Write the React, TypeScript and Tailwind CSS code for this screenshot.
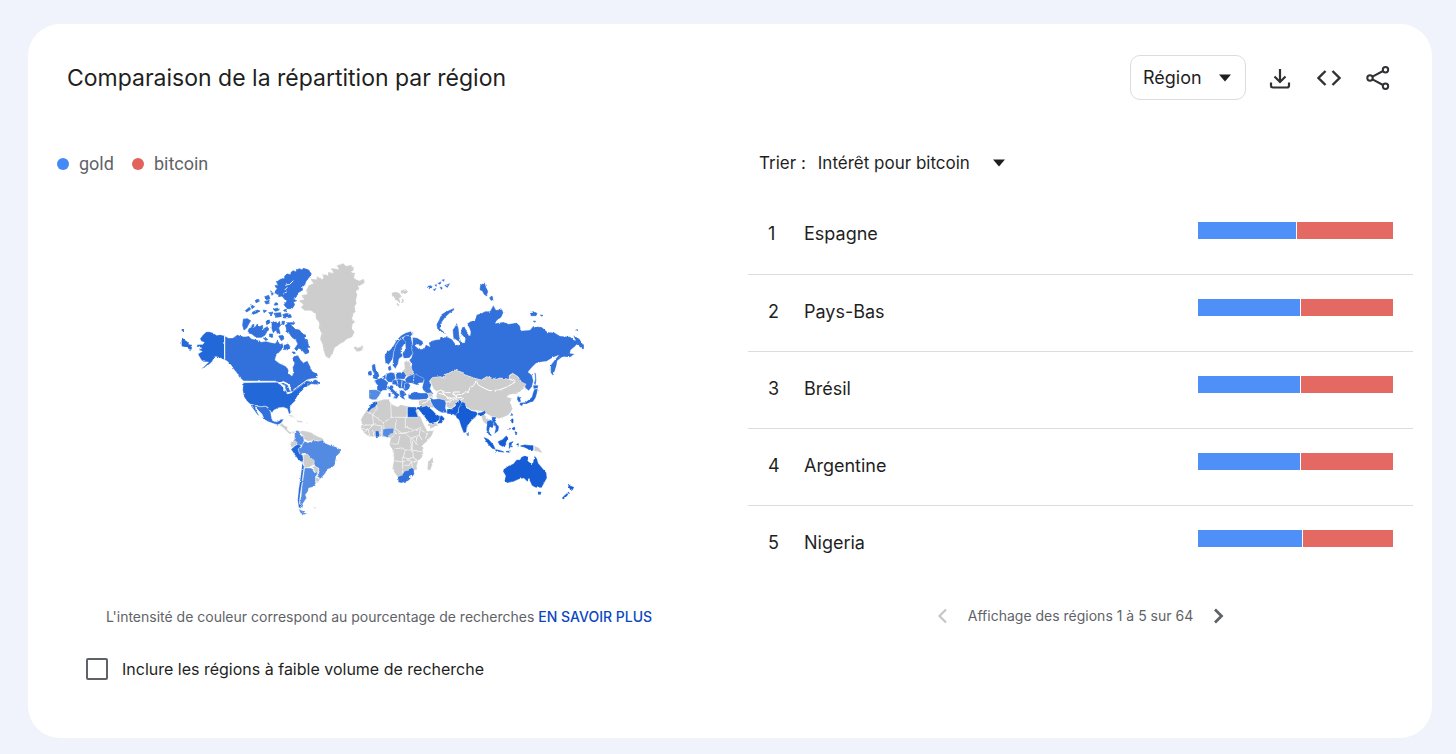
import { useState } from 'react';

const regions = [
  { rank: 1, name: 'Espagne', gold: 50.5 },
  { rank: 2, name: 'Pays-Bas', gold: 52.5 },
  { rank: 3, name: 'Brésil', gold: 52.5 },
  { rank: 4, name: 'Argentine', gold: 52.5 },
  { rank: 5, name: 'Nigeria', gold: 53.5 },
];

const legend = [
  { label: 'gold', dot: 'bg-[#448af6]' },
  { label: 'bitcoin', dot: 'bg-[#e2635c]' },
];

// bold shapes are small islands, outlined in their own colour so they stay visible
type Shape = { d: string; fill: string; bold?: boolean };

const GREY = '#cdcdcd';
const LIGHT = '#538ae2';
const MID = '#3071db';
const STRONG = '#2468d8';
const DARK = '#125cd4';

const americas: Shape[] = [
  // Alaska and the tip of Chukotka
  { fill: STRONG, d: 'M164 257L150 254L140 256L128 248L118 245L108 246L98 256L90 266L94 274L103 277L99 283L82 284L80 290L96 294L86 300L97 304L84 312L88 320L94 330L100 335L116 336L108 344L93 358L104 352L118 343L126 335L131 326L134 320L141 320L152 324L164 329Z' },
  { fill: STRONG, d: 'M36 264L46 272L54 278L56 284L66 286L62 290L68 296L60 298L50 292L46 290L36 288ZM36 238L41 240L40 243L36 242Z', bold: true },
  // Canada
  { fill: MID, d: 'M164 258L176 264L188 264L202 254L212 258L224 260L236 258L244 266L262 270L274 276L288 274L304 278L316 280L322 270L330 282L338 280L340 294L332 302L318 318L315 330L328 340L346 348L354 356L358 372L366 378L370 370L368 352L374 340L366 328L372 318L384 316L392 330L400 338L412 332L420 348L426 362L440 374L442 384L424 386L410 390L424 396L436 388L448 396L440 404L424 402L408 412L390 414L374 424L352 428L340 404L322 395L222 394L208 382L200 368L190 356L184 346L172 334L164 329Z' },
  { fill: MID, bold: true, d: 'M346 226L356 220L366 228L376 238L388 240L398 252L408 256L402 264L412 272L414 282L420 292L412 292L416 308L406 312L396 300L386 294L380 302L374 296L384 282L378 270L366 262L358 250L348 246L350 236Z' },
  { fill: MID, bold: true, d: 'M424 72L416 60L400 55L396 60L388 56L380 60L378 66L370 62L364 66L362 74L352 72L344 78L344 86L334 86L320 96L324 104L314 108L322 116L312 128L326 132L326 140L336 138L346 150L352 152L342 164L352 176L366 176L374 164L370 156L380 152L368 148L378 142L384 128L398 120L396 112L404 104L408 94L414 86Z' },
  { fill: MID, bold: true, d: 'M220 208L232 206L242 212L236 222L230 234L222 240L218 226ZM236 238L250 222L254 234L262 222L268 230L278 226L278 236L290 246L284 256L274 262L258 262L246 252L234 248Z' },
  { fill: MID, bold: true, d: 'M284 140L296 136L300 146L290 150ZM302 122L310 132L306 136ZM284 154L296 152L298 160L288 162ZM256 150L266 148L268 154L258 158ZM242 164L254 170L246 176ZM226 182L238 172L242 178L230 186ZM248 186L262 180L272 184L258 190L246 194ZM280 180L290 182L282 188ZM296 188L310 186L304 196ZM312 160L320 158L324 164L314 166ZM310 178L322 174L328 180L316 184ZM312 190L332 188L334 200L318 202ZM338 194L350 190L362 194L364 202L344 204ZM340 180L350 178L346 186Z' },
  { fill: MID, bold: true, d: 'M288 214L298 210L300 218L290 224ZM306 218L316 212L322 222L328 214L332 224L326 234L330 248L322 250L318 238L310 248L306 236ZM336 214L344 214L342 224L336 222ZM282 236L292 230L296 240L288 246ZM298 252L308 252L308 262L300 262ZM280 264L292 266L288 272ZM326 258L338 256L342 266L334 272ZM342 286L354 282L360 290L352 300L342 298ZM366 306L374 306L376 310L370 312ZM352 218L374 218L372 223L354 223Z' },
  { fill: MID, bold: true, d: 'M430 368L440 370L442 377L434 379ZM442 395L450 398L446 401Z' },
  // United States
  { fill: STRONG, d: 'M220 398L322 397L332 404L344 418L352 430L366 426L384 414L398 404L410 392L416 396L412 408L404 414L398 420L388 430L380 442L376 452L366 462L360 472L362 490L357 492L352 476L340 472L326 473L312 480L306 488L302 484L294 472L286 468L272 470L256 466L240 462L230 452L222 440L218 420Z' },
  // Mexico
  { fill: MID, d: 'M240 464L256 467L272 471L286 469L294 474L302 486L304 500L308 512L318 516L328 512L332 508L341 508L336 516L330 522L322 524L308 520L292 514L282 506L276 492L268 484L262 478L256 470L258 480L268 498L262 494L252 480Z' },
  { fill: GREY, d: 'M326 524L336 520L342 526L352 530L352 540L362 546L374 544L372 550L358 552L346 540L338 532ZM352 494L366 496L378 506L366 502ZM380 510L398 514L396 518L382 516ZM408 518L414 518L412 521Z' },
];

const southAmerica: Shape[] = [
  { fill: GREY, d: 'M386 186L396 182L410 184L424 188L440 198L456 204L462 210L452 214L438 212L424 212L414 214L408 210L402 208L398 196Z' },
  { fill: LIGHT, d: 'M374 188L380 181L388 184L390 194L400 200L402 212L398 224L388 226L380 222L370 214L374 204Z' },
  { fill: GREY, d: 'M364 214L376 212L382 218L372 228L366 234L360 226Z' },
  { fill: LIGHT, d: 'M398 222L404 214L414 218L424 214L434 212L446 214L458 210L466 220L480 226L496 230L511 238L510 248L500 258L496 272L494 286L484 294L472 298L466 310L452 326L440 318L448 308L446 294L436 290L430 276L422 264L410 254L400 250L388 250L384 238L394 232Z' },
  { fill: STRONG, d: 'M362 236L368 234L374 228L384 222L394 228L384 238L388 250L398 256L400 268L397 278L384 268L374 254Z' },
  { fill: GREY, d: 'M400 254L412 252L424 264L434 276L428 286L418 292L406 294L400 280ZM426 290L436 288L446 298L446 308L436 308ZM436 322L450 326L446 336L436 334Z' },
  { fill: LIGHT, d: 'M404 294L414 294L424 294L434 308L444 310L436 320L436 334L438 346L426 352L416 354L414 364L406 374L410 384L404 392L398 402L398 414L392 414L390 398L394 374L396 350L400 322Z' },
  { fill: STRONG, d: 'M397 278L402 290L398 318L394 350L390 376L388 398L394 416L386 412L383 390L386 358L392 320Z' },
  { fill: LIGHT, d: 'M386 418L398 422L402 428L412 430L402 434L392 430ZM430 414L436 412L436 415Z' },
];

const greenland: Shape[] = [
  { fill: GREY, d: 'M478 326L466 318L460 300L458 284L450 268L454 250L446 234L448 218L438 206L436 190L422 182L404 182L392 172L400 164L386 152L402 148L394 136L412 132L408 122L416 106L430 100L420 86L440 88L440 78L456 88L460 82L456 72L474 76L474 66L490 70L484 54L506 58L500 46L520 40L528 48L544 44L552 58L544 66L556 70L552 84L568 92L580 86L586 96L576 104L566 108L568 116L558 124L562 134L558 150L560 160L554 170L558 184L552 190L546 206L556 216L548 222L546 236L554 246L546 262L530 268L522 276L510 282L496 292L488 310Z' },
  { fill: GREY, bold: true, d: 'M552 293L558 291L562 295L577 290L579 297L570 303L560 303L556 298Z' },
];

const northEurasia: Shape[] = [
  // Svalbard
  { fill: GREY, bold: true, d: 'M156 130L164 127L176 129L184 140L176 145L180 156L172 152L164 143L158 139ZM184 122L197 119L203 126L192 131L184 129ZM186 146L191 151L188 158ZM170 162L177 164L176 168Z' },
  // Arctic archipelagos
  { fill: MID, d: 'M262 108L272 106L280 112L268 118ZM280 106L291 102L290 110ZM292 100L304 94L302 106ZM304 90L314 86L312 96ZM312 106L331 100L322 114ZM298 110L311 111L304 120ZM278 118L290 115L284 124Z' },
  { fill: MID, bold: true, d: 'M422 106L433 99L437 112L443 124L440 138L432 132L428 123L420 119ZM449 143L456 138L459 149L453 151ZM571 188L580 185L591 190L588 197L573 197ZM601 195L609 196L606 199ZM580 213L587 214L584 217ZM709 239L715 240L712 242Z' },
  { fill: MID, bold: true, d: 'M293 236L291 224L299 208L305 194L317 187L330 181L341 176L341 180L328 189L315 201L307 212L301 222L299 236L314 249L306 246Z' },
  // Russia
  { fill: MID, d: 'M218 262L232 264L248 274L250 284L240 288L230 282L226 288L238 298L252 296L258 284L270 290L266 278L284 270L300 268L300 262L324 262L336 268L346 282L356 286L358 276L340 264L338 240L346 228L350 218L356 236L358 260L364 278L374 278L376 266L362 250L366 232L374 230L380 244L390 258L392 246L388 234L380 222L392 214L404 212L410 194L424 190L436 184L450 184L460 166L468 180L486 178L490 188L484 202L470 212L466 220L490 216L506 222L530 218L540 228L542 242L570 240L580 228L606 232L622 246L644 248L660 258L690 260L706 272L700 256L718 266L732 288L732 298L720 292L712 282L704 290L692 300L690 310L704 312L690 322L668 320L652 332L650 344L640 378L632 368L632 346L644 330L656 316L640 322L620 334L604 336L588 340L574 354L564 366L576 376L580 392L576 410L566 422L556 414L552 404L544 396L534 380L518 370L508 376L508 388L480 384L470 388L440 380L424 390L408 386L396 382L374 374L364 366L344 360L326 370L312 374L316 384L300 380L276 384L268 394L274 404L270 416L280 432L272 434L258 428L246 416L252 390L236 382L224 376L218 366L212 356L216 344L208 330L214 324L218 310L212 296L218 280Z' },
  { fill: MID, d: 'M584 366L588 372L589 392L586 410L583 400L585 386Z' },
  // Nordics
  { fill: MID, d: 'M196 256L212 258L217 280L214 296L219 310L208 324L191 325L187 310L197 298L196 282L186 270Z' },
  { fill: MID, d: 'M160 310L166 288L176 272L190 264L195 280L183 296L183 312L189 318L177 326L174 342L166 356L158 346Z' },
  { fill: MID, d: 'M134 318L140 306L150 300L160 288L170 270L184 256L198 248L213 244L218 256L198 257L181 266L168 284L161 306L157 328L146 344L136 340Z' },
  { fill: GREY, d: 'M192 334L208 334L212 346L216 358L222 374L204 380L192 376L186 364L194 356Z' },
  // British Isles and Denmark
  { fill: MID, bold: true, d: 'M97 346L104 343L106 356L112 364L117 378L110 385L99 384L104 372L98 360ZM85 366L93 363L95 374L87 377ZM145 352L151 348L153 359L147 361Z' },
];

const southEurasia: Shape[] = [
  { fill: MID, d: 'M140 11L152 7L163 9L167 24L158 37L144 36L137 26ZM127 20L137 13L138 27L129 27Z' },
  { fill: MID, d: 'M167 8L193 5L198 18L193 28L169 27Z' },
  { fill: MID, d: 'M102 32L118 25L126 23L137 31L145 38L139 52L141 61L128 61L122 67L111 61L111 44Z' },
  { fill: LIGHT, d: 'M87 59L108 59L123 66L117 78L108 89L96 89L87 85Z' },
  { fill: MID, d: 'M140 50L156 45L161 52L158 56L169 67L180 75L174 80L171 86L157 84L166 80L159 70L149 62ZM145 69L152 69L152 81L146 81Z' },
  { fill: MID, d: 'M158 31L176 27L190 31L204 36L211 46L207 58L196 63L188 55L178 55L170 45L156 43Z' },
  { fill: MID, d: 'M179 59L192 63L200 74L191 79L196 90L184 84L179 72Z' },
  { fill: MID, d: 'M195 28L204 19L224 11L236 17L253 26L249 38L236 39L232 46L214 39L199 39Z' },
  { fill: MID, d: 'M205 73L224 65L240 69L261 69L268 80L258 88L236 89L216 89L205 85Z' },
  // Central Asia and China
  { fill: GREY, d: 'M270 32L278 22L300 20L316 24L312 14L326 10L344 0L364 6L374 14L396 22L424 30L440 20L470 28L480 24L508 28L508 18L518 10L534 20L544 36L558 42L552 56L540 62L530 72L520 72L508 74L500 80L518 86L510 96L516 110L514 124L504 136L490 142L476 146L466 142L454 140L444 134L430 124L412 122L396 120L378 112L370 100L362 90L352 94L344 108L332 116L320 112L318 96L306 88L296 90L288 80L292 66L280 56L276 46Z' },
  { fill: GREY, d: 'M236 92L256 88L268 88L276 104L284 114L272 112L256 108L246 112L236 104ZM262 70L274 68L280 80L268 80Z' },
  { fill: MID, d: 'M268 82L280 88L296 86L314 90L318 100L316 114L322 128L306 128L294 122L282 112L274 98Z' },
  { fill: DARK, d: 'M229 111L246 111L260 107L276 119L291 135L301 138L299 149L288 157L270 161L261 150L249 134Z' },
  { fill: DARK, d: 'M298 140L304 134L314 146L305 159L292 161L298 150Z' },
  { fill: GREY, d: 'M264 162L288 158L294 166L272 176Z' },
  { fill: DARK, d: 'M321 117L334 117L345 108L351 95L363 91L367 104L357 112L355 126L347 138L336 133L321 131Z' },
  { fill: DARK, d: 'M356 115L366 95L375 99L379 111L396 121L408 123L413 132L405 143L397 149L389 159L381 169L379 187L371 189L363 169L357 149L349 143L347 134L355 126ZM412 129L424 127L437 121L437 129L428 139L416 137ZM379 190L386 189L387 197L381 197Z' },
  // South-East Asia
  { fill: GREY, d: 'M424 138L434 134L442 144L448 150L440 156L442 164L434 160L428 152Z' },
  { fill: STRONG, d: 'M441 153L454 149L463 162L457 173L449 173L447 184L456 197L448 198L439 180ZM455 141L469 141L465 154L477 170L475 183L463 192L467 174L457 156Z' },
  { fill: DARK, bold: true, d: 'M433 203L446 209L459 224L465 237L457 235L445 222ZM467 239L484 243L491 246L468 243ZM475 215L488 209L499 198L505 206L497 216L497 225L488 229L479 224ZM508 219L519 215L513 222L517 231L511 229L508 235ZM498 245L511 243L508 247ZM530 223L535 221L534 229ZM542 228L554 225L572 227L579 227L579 241L566 237L553 231Z' },
  { fill: DARK, bold: true, d: 'M515 147L519 147L519 159L515 157ZM516 176L523 171L525 178L520 179ZM525 185L531 188L528 195ZM514 131L517 132L516 137ZM507 179L511 174L508 181Z' },
  { fill: GREY, d: 'M583 227L596 233L609 249L594 245L583 243Z' },
  { fill: STRONG, d: 'M539 98L556 97L566 89L575 82L579 68L583 57L593 57L591 70L587 83L581 93L568 98L560 102L549 102L546 109L539 104ZM579 46L595 46L593 55L581 57ZM533 77L541 83L543 95L536 97L531 88Z' },
  // Oceania
  { fill: DARK, d: 'M491 298L506 287L520 281L530 269L540 269L544 261L554 257L567 261L563 272L574 281L579 278L584 257L591 266L595 280L607 294L619 308L621 324L613 338L605 353L588 353L576 347L567 328L562 335L552 325L538 327L520 335L502 339L493 332L497 318L489 304Z' },
  { fill: DARK, bold: true, d: 'M594 366L603 367L600 374ZM685 343L692 349L701 352L696 361L691 359ZM687 366L680 378L670 387L667 384L677 374Z' },
];

const africa: Shape[] = [
  { fill: GREY, d: 'M78 124L90 116L108 104L110 94L132 88L148 88L152 102L162 106L174 110L182 104L200 108L228 112L232 124L244 146L252 164L262 184L282 180L276 196L262 212L246 228L250 250L246 262L234 274L230 290L232 298L222 302L218 316L204 330L184 338L176 336L174 322L162 306L158 290L162 270L160 244L148 224L152 206L146 200L130 202L116 196L100 200L84 198L72 188L62 174L66 160L62 148Z' },
  { fill: GREY, d: 'M264 276L278 261L280 276L271 301L262 299Z' },
  { fill: STRONG, d: 'M79 125L87 114L94 99L108 94L113 101L105 111L94 117L86 125Z' },
  { fill: DARK, d: 'M201 111L227 111L231 118L227 122L235 143L201 143Z' },
  { fill: LIGHT, d: 'M129 177L146 175L163 175L159 189L150 193L144 203L129 197Z' },
  { fill: STRONG, d: 'M106 183L116 182L119 199L107 202Z' },
  { fill: MID, d: 'M174 320L186 315L194 303L206 301L214 293L221 296L223 312L213 325L204 333L184 339L175 337Z' },
];

const africaBorders =
  'M80 124L98 134L100 164L70 166M98 134L112 116L108 104M98 134L130 158L154 142L152 102M154 142L196 142L202 142V110M196 142V170L194 176M130 158L132 178M168 148L166 176M196 142H234M100 164L84 180L64 174M100 164L128 168M84 180L90 198M98 180L102 198M124 170L124 198M166 176L186 190L214 184L244 172M162 176L166 190L150 206M166 190L196 190L212 204L214 240L196 240L188 234L164 236M180 196L174 222L152 222M212 204L238 196L240 178M238 196L246 210M214 204L236 228M218 212L216 240L248 246M218 240L220 262L206 266L188 262L188 276L162 272M196 240L190 262M188 276L188 310M188 276L206 268L214 276L206 286L190 286M214 276L230 274L222 262M218 292L214 276M232 200L226 222M240 178L262 192L256 206M84 180L70 186M196 170L218 178';

const asiaBorders =
  'M410 32L400 48L390 52L386 64L366 72L346 76L330 68L316 68L302 60L290 66M410 34L414 44L430 54L450 62L476 60L498 52L520 40L528 34L508 28M296 70L312 74L328 88L344 82L352 90M304 62L318 80L334 84M346 76L350 84L366 82M318 96L334 92L344 86M362 90L372 84M378 112L396 122L412 124M268 88L256 98L246 100M344 76L340 66L360 66';

function Land({ shapes }: { shapes: Shape[] }) {
  return (
    <>
      {shapes.map((s, i) => (
        <path
          key={i}
          d={s.d}
          fill={s.fill}
          stroke={s.bold ? s.fill : '#fff'}
          strokeWidth={s.bold ? 2 : 1}
        />
      ))}
    </>
  );
}

function WorldMap() {
  return (
    <svg viewBox="0 0 1290 840" className="w-[430px] max-w-full" role="img" aria-label="Carte du monde">
      <defs>
        <filter id="coast" x="0" y="0" width="100%" height="100%">
          <feTurbulence type="fractalNoise" baseFrequency="0.11" numOctaves="2" seed="4" result="noise" />
          <feDisplacementMap in="SourceGraphic" in2="noise" scale="7" xChannelSelector="R" yChannelSelector="G" />
        </filter>
      </defs>
      <g filter="url(#coast)" stroke="#fff" strokeLinejoin="round">
        <rect width="1290" height="840" fill="none" stroke="none" />
        <Land shapes={greenland} />
        <Land shapes={americas} />
        {/* Great Lakes and the Saint Lawrence */}
        <path d="M326 400L340 396L352 402L360 410M344 406L342 424M356 408L362 422M352 430L366 426" fill="none" strokeWidth="5" />
        <path d="M370 420L400 398L412 390" fill="none" strokeWidth="3" />
        <path d="M352 112L344 120M370 92L360 102L346 106M340 132L350 126" fill="none" strokeWidth="3" />
        <g transform="translate(0 360)">
          <Land shapes={southAmerica} />
        </g>
        <g transform="translate(510 0)">
          <Land shapes={northEurasia} />
        </g>
        <g transform="translate(510 360)" fill="none">
          <Land shapes={southEurasia} />
          <Land shapes={africa} />
          <path d={africaBorders} strokeWidth="2" />
          <path d={asiaBorders} strokeWidth="3" />
          <path d="M212 317L216 321L210 324L207 320Z" fill={GREY} strokeWidth="3" />
          <path d="M170 28L174 44M186 32L184 52M196 40L192 56M222 14L220 38" strokeWidth="2" />
        </g>
      </g>
      <path d="M164 258V328M222 394H318" stroke="#fff" strokeWidth="3" fill="none" />
    </svg>
  );
}

function Caret({ className }: { className: string }) {
  return (
    <svg viewBox="0 0 12 8" className={`pointer-events-none absolute h-2 w-3 ${className}`} aria-hidden="true">
      <path d="M0 0.5H12L6 7.5Z" fill="#1f1f1f" />
    </svg>
  );
}

export default function App() {
  const [resolution, setResolution] = useState('region');
  const [sort, setSort] = useState('bitcoin');
  const [lowVolume, setLowVolume] = useState(false);

  return (
    <div className="flex min-h-screen bg-[#f0f3fb] px-6 pt-6 pb-4 pl-7 font-[Inter,sans-serif] text-[#1f1f1f]">
      <main className="flex-1 rounded-[32px] bg-white">
        {/* Header */}
        <header className="flex items-center justify-between pt-[31px] pr-[42px] pl-[39px]">
          <h1 className="text-[23px] leading-8">Comparaison de la répartition par région</h1>
          <div className="flex items-center gap-[22px]">
            <div className="relative flex items-center">
              <select
                aria-label="Résolution"
                value={resolution}
                onChange={(e) => setResolution(e.target.value)}
                className="h-[45px] w-[116px] appearance-none rounded-[10px] border border-[#dadce0] bg-white pl-3 text-lg"
              >
                <option value="region">Région</option>
                <option value="city">Ville</option>
              </select>
              <Caret className="right-[15px]" />
            </div>
            <div className="flex items-center gap-[25px]">
              <button aria-label="Télécharger" className="h-6 w-6">
                <svg viewBox="0 0 24 24" fill="none" stroke="#303134" strokeWidth="2.2">
                  <path d="M12 3V15.5M6.500 10.500L12 16L17.500 10.500M3 16.500V19.500Q3 21.500 5 21.500H19Q21 21.500 21 19.500V16.500" />
                </svg>
              </button>
              <button aria-label="Intégrer" className="h-6 w-6">
                <svg viewBox="0 0 24 24" fill="none" stroke="#303134" strokeWidth="2.4">
                  <path d="M8.500 5L1.500 12L8.500 19M15.500 5L22.500 12L15.500 19" />
                </svg>
              </button>
              <button aria-label="Partager" className="h-6 w-6">
                <svg viewBox="0 0 24 24" fill="none" stroke="#303134" strokeWidth="2">
                  <circle cx="4" cy="12" r="2.700" />
                  <circle cx="19.500" cy="3.700" r="2.700" />
                  <circle cx="19.500" cy="20.300" r="2.700" />
                  <path d="M6.500 10.700L17 5M6.500 13.300L17 19" />
                </svg>
              </button>
            </div>
          </div>
        </header>

        <div className="grid grid-cols-2 pt-[51px]">
          {/* Map side */}
          <section>
            <ul className="flex gap-[18px] pl-[29px] font-[Roboto,sans-serif] text-lg leading-[26px] text-[#5f6368]">
              {legend.map((item) => (
                <li key={item.label} className="flex items-center gap-[10px]">
                  <span className={`h-3 w-3 rounded-full ${item.dot}`} />
                  {item.label}
                </li>
              ))}
            </ul>
            <div className="flex justify-center pt-[73px] pl-3">
              <WorldMap />
            </div>
            <p className="pt-[75px] text-center text-sm leading-6 text-[#5f6368]">
              L'intensité de couleur correspond au pourcentage de recherches{' '}
              <a href="#plus" className="font-medium text-[#0b47c1]">EN SAVOIR PLUS</a>
            </p>
            <label className="flex items-center gap-[14px] pt-7 pl-[58px] text-base leading-6">
              <input
                type="checkbox"
                checked={lowVolume}
                onChange={(e) => setLowVolume(e.target.checked)}
                className="h-[22px] w-[22px] appearance-none rounded-[2px] border-2 border-[#5f6368] checked:bg-[#5f6368]"
              />
              Inclure les régions à faible volume de recherche
            </label>
          </section>

          {/* Ranking side */}
          <section className="pr-[19px] pl-[18px]">
            <div className="flex items-center gap-3 pl-[11px] text-[17px] leading-6">
              <label htmlFor="sort">Trier :</label>
              <div className="relative flex items-center">
                <select
                  id="sort"
                  value={sort}
                  onChange={(e) => setSort(e.target.value)}
                  className="w-[187px] appearance-none bg-transparent"
                >
                  <option value="bitcoin">Intérêt pour bitcoin</option>
                  <option value="gold">Intérêt pour gold</option>
                </select>
                <Caret className="right-0" />
              </div>
            </div>
            <table className="mt-[22px] w-full text-lg leading-6">
              <tbody>
                {regions.map((r) => (
                  <tr key={r.rank} className="h-[77px] border-b border-[#dadce0] last:border-0">
                    <td className="w-14 pb-[2px] pl-5">{r.rank}</td>
                    <td className="pb-[2px]">{r.name}</td>
                    <td className="w-[215px] pr-5 pb-[10px]">
                      <div className="flex h-[17px] gap-px">
                        <div className="bg-[#4e8ff8]" style={{ width: `${r.gold}%` }} />
                        <div className="flex-1 bg-[#e46962]" />
                      </div>
                    </td>
                  </tr>
                ))}
              </tbody>
            </table>
            <nav className="flex items-center justify-center gap-[13px] pt-[22px] text-sm leading-6 text-[#5f6368]">
              <button aria-label="Page précédente" disabled className="h-6 w-6 text-[#c4c7c5]">
                <svg viewBox="0 0 24 24" fill="none" stroke="currentColor" strokeWidth="2.2">
                  <path d="M15 5.500L8.500 12L15 18.500" />
                </svg>
              </button>
              <span>Affichage des régions 1 à 5 sur 64</span>
              <button aria-label="Page suivante" className="h-6 w-6">
                <svg viewBox="0 0 24 24" fill="none" stroke="currentColor" strokeWidth="2.8">
                  <path d="M9 5.500L15.500 12L9 18.500" />
                </svg>
              </button>
            </nav>
          </section>
        </div>
      </main>
    </div>
  );
}
